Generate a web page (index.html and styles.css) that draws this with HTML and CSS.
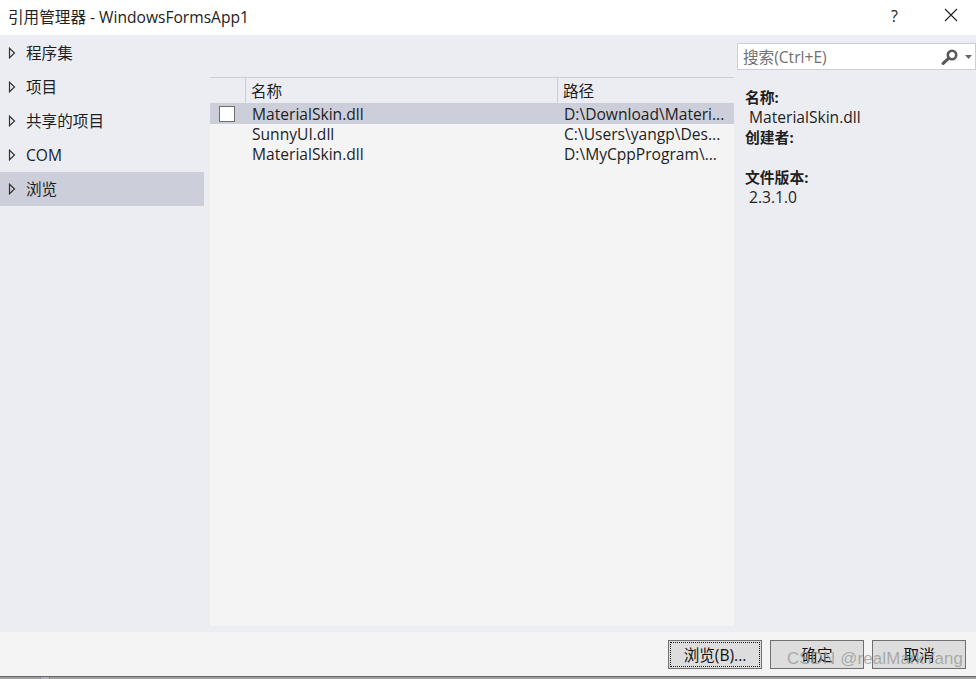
FILE: index.html
```html
<!DOCTYPE html>
<html lang="zh">
<head>
<meta charset="utf-8">
<title>引用管理器</title>
<link rel="stylesheet" href="styles.css">
</head>
<body>
<div class="dialog">
  <header class="titlebar">
    <div class="title">引用管理器 - WindowsFormsApp1</div>
    <div class="help">?</div>
    <svg class="close" width="14" height="14" viewBox="0 0 14 14"><path d="M1 1L13 13M13 1L1 13" stroke="#222" stroke-width="1.1" fill="none"/></svg>
  </header>
  <main class="content">
    <nav class="sidebar">
      <div class="nav-item"><svg class="tri" width="8" height="12" viewBox="0 0 8 12"><path d="M1.5 1.2L6.5 6L1.5 10.8Z" fill="none" stroke="#333" stroke-width="1.2"/></svg><span>程序集</span></div>
      <div class="nav-item"><svg class="tri" width="8" height="12" viewBox="0 0 8 12"><path d="M1.5 1.2L6.5 6L1.5 10.8Z" fill="none" stroke="#333" stroke-width="1.2"/></svg><span>项目</span></div>
      <div class="nav-item"><svg class="tri" width="8" height="12" viewBox="0 0 8 12"><path d="M1.5 1.2L6.5 6L1.5 10.8Z" fill="none" stroke="#333" stroke-width="1.2"/></svg><span>共享的项目</span></div>
      <div class="nav-item"><svg class="tri" width="8" height="12" viewBox="0 0 8 12"><path d="M1.5 1.2L6.5 6L1.5 10.8Z" fill="none" stroke="#333" stroke-width="1.2"/></svg><span>COM</span></div>
      <div class="nav-item selected"><svg class="tri" width="8" height="12" viewBox="0 0 8 12"><path d="M1.5 1.2L6.5 6L1.5 10.8Z" fill="none" stroke="#333" stroke-width="1.2"/></svg><span>浏览</span></div>
    </nav>
    <section class="list">
      <div class="list-head">
        <div class="col-check"></div>
        <div class="col-name">名称</div>
        <div class="col-path">路径</div>
      </div>
      <div class="row selected">
        <div class="cell-check"><span class="checkbox"></span></div>
        <div class="cell-name">MaterialSkin.dll</div>
        <div class="cell-path">D:\Download\Materi...</div>
      </div>
      <div class="row">
        <div class="cell-check"></div>
        <div class="cell-name">SunnyUI.dll</div>
        <div class="cell-path">C:\Users\yangp\Des...</div>
      </div>
      <div class="row">
        <div class="cell-check"></div>
        <div class="cell-name">MaterialSkin.dll</div>
        <div class="cell-path">D:\MyCppProgram\...</div>
      </div>
    </section>
    <aside class="details">
      <div class="search">
        <span class="search-text">搜索(Ctrl+E)</span>
        <svg class="search-icon" width="18" height="16" viewBox="0 0 18 16"><circle cx="11" cy="6" r="4.2" fill="none" stroke="#5a5a5a" stroke-width="2.6"/><path d="M7.8 9.2L2.2 14.4" stroke="#5a5a5a" stroke-width="3.2" stroke-linecap="round"/></svg>
        <svg class="search-caret" width="7" height="4" viewBox="0 0 7 4"><path d="M0 0H7L3.5 4Z" fill="#666"/></svg>
      </div>
      <div class="info">
        <div class="label">名称:</div>
        <div class="value">MaterialSkin.dll</div>
        <div class="label">创建者:</div>
        <div class="blank"></div>
        <div class="label">文件版本:</div>
        <div class="value">2.3.1.0</div>
      </div>
    </aside>
  </main>
  <footer class="footer">
    <button class="btn focused"><span class="btn-inner">浏览(B)...</span></button>
    <button class="btn"><span class="btn-inner">确定</span></button>
    <button class="btn"><span class="btn-inner">取消</span></button>
    <div class="watermark">CSDN @realMarkYang</div>
  </footer>
  <div class="edge"><span class="edge-notch"></span></div>
</div>
</body>
</html>
```
FILE: styles.css
```css
* { box-sizing: border-box; }
html, body { margin: 0; padding: 0; }
body {
  width: 976px;
  height: 679px;
  overflow: hidden;
  font-family: "Open Sans", "Noto Sans CJK SC", sans-serif;
  font-size: 15.6px;
  color: #1e1e1e;
}
.dialog { display: flex; flex-direction: column; height: 679px; background: #ecedf2; position: relative; }

.titlebar { height: 35px; background: #fff; display: flex; align-items: center; padding: 0 18px 0 8px; flex: none; }
.title { flex: 1; font-size: 15.6px; color: #222; line-height: 20px; margin-top: -2px; }
.help { font-size: 16px; width: 14px; margin-right: 39px; color: #222; margin-top: -4px; }
.close { flex: none; margin-top: -5px; }

.content { height: 597px; flex: none; display: flex; }

.sidebar { width: 204px; flex: none; padding-top: 1px; margin-right: 6px; }
.nav-item { height: 34px; display: flex; align-items: center; padding-left: 8px; gap: 10px; line-height: 20px; }
.nav-item.selected { background: #ccced9; }
.tri { flex: none; }

.list { width: 524px; flex: none; margin-top: 42px; margin-bottom: 6px; background: #f4f4f5; margin-right: 3px; }
.list-head { height: 26px; display: flex; border-top: 1px solid #ccced9; background: #ecedf2; }
.col-check { width: 36px; border-right: 1px solid #ccced9; }
.col-name { width: 312px; border-right: 1px solid #ccced9; padding-left: 5px; line-height: 26px; }
.col-path { flex: 1; padding-left: 5px; line-height: 26px; }
.row { height: 20px; display: flex; align-items: center; line-height: 20px; }
.row.selected { height: 21px; background: #ccced9; }
.cell-check { width: 42px; flex: none; display: flex; align-items: center; padding-left: 9px; }
.checkbox { width: 16px; height: 16px; background: #fff; border: 1px solid #6d6d6d; display: block; }
.cell-name { width: 312px; flex: none; }
.cell-path { flex: 1; white-space: nowrap; overflow: hidden; }

.details { flex: 1; padding-top: 8px; }
.search { height: 27px; background: #fff; border: 1px solid #ccced9; display: flex; align-items: center; padding: 0 3px 0 5px; color: #717171; }
.search-text { flex: 1; line-height: 20px; }
.search-icon { flex: none; margin-right: 6px; }
.search-caret { flex: none; }
.info { padding: 17px 0 0 8px; }
.label { font-weight: 700; height: 20px; line-height: 20px; font-size: 14.8px; }
.value { height: 20px; line-height: 20px; padding-left: 4px; }
.blank { height: 20px; }

.footer { flex: 1; background: #f4f4f4; display: flex; justify-content: flex-end; gap: 8px; padding: 8px 10px 0 0; position: relative; }
.btn { width: 94px; height: 29px; border: 1px solid #707070; background: #dddddd; font: inherit; color: #111; padding: 1px; }
.btn-inner { display: flex; width: 100%; height: 100%; align-items: center; justify-content: center; border: 1px dotted transparent; line-height: 20px; }
.btn.focused .btn-inner { border-color: #111; }
.watermark { position: absolute; left: 787px; top: 17px; font-size: 16.8px; font-family: "Liberation Sans", sans-serif; color: rgba(150,150,150,.75); letter-spacing: .2px; white-space: nowrap; }
.edge { height: 3px; flex: none; background: #a0a0a0; border-top: 1px solid #666; position: relative; }
.edge-notch { position: absolute; left: 40px; top: 0; width: 10px; height: 2px; background: #b4b4bc; border-left: 1px solid #8a8a92; border-right: 1px solid #8a8a92; }
```
